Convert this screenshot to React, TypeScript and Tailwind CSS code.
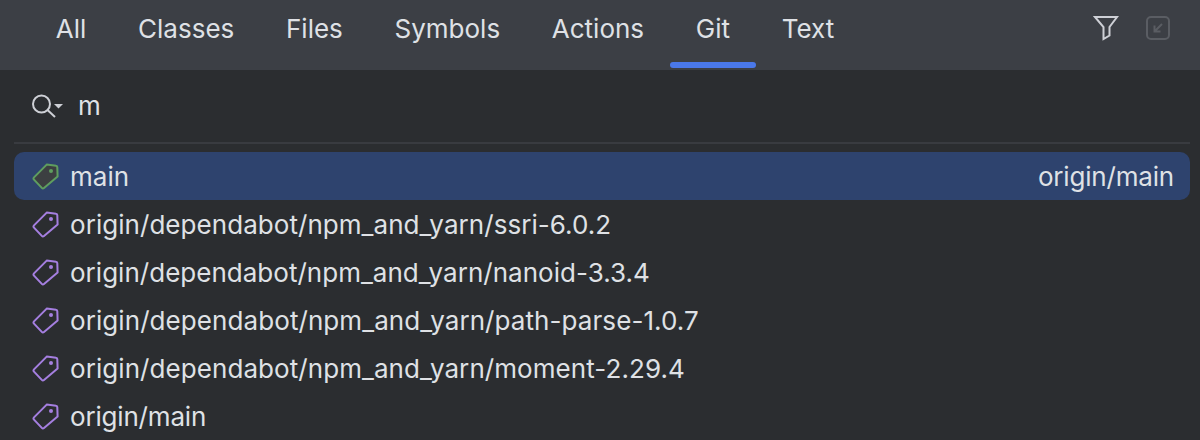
const tabs = ['All', 'Classes', 'Files', 'Symbols', 'Actions', 'Git', 'Text']

const rows = [
    { name: 'main', hint: 'origin/main', selected: true, tracking: '' },
    { name: 'origin/dependabot/npm_and_yarn/ssri-6.0.2', tracking: 'tracking-[0.05px]' },
    { name: 'origin/dependabot/npm_and_yarn/nanoid-3.3.4', tracking: 'tracking-[0.02px]' },
    { name: 'origin/dependabot/npm_and_yarn/path-parse-1.0.7', tracking: 'tracking-[0.08px]' },
    { name: 'origin/dependabot/npm_and_yarn/moment-2.29.4', tracking: 'tracking-[0.07px]' },
    { name: 'origin/main', tracking: 'tracking-[-0.18px]' }
]

function TagIcon({ selected }: { selected?: boolean }) {
    const stroke = selected ? '#5f9e5f' : '#a57fe0'
    return (
        <svg className="h-[28px] w-[28px] shrink-0" viewBox="0 0 28 28" fill="none">
            <path
                d="M14.7 2.6 L24 3.8 a1.4 1.4 0 0 1 1.3 1.3 L25.6 14.6 L12 26 a1.6 1.6 0 0 1 -2.2 -0.1 L2 17.6 a1.6 1.6 0 0 1 0 -2.2 Z"
                fill={selected ? '#3c3f41' : 'none'}
                stroke={stroke}
                strokeWidth="2"
                strokeLinejoin="round"
            />
            <circle cx="19" cy="9" r="2" fill={stroke} />
        </svg>
    )
}

export default function App() {
    return (
        <div className="h-[440px] w-[1200px] overflow-hidden bg-[#2b2d30] font-['Inter',sans-serif] text-[26px] text-[#dfe1e5]">
            <div className="flex h-[70px] items-stretch bg-[#3c3f45] pl-[30px] pr-[29px]">
                {tabs.map((tab) => (
                    <div key={tab} className="relative flex items-center px-[25.85px] pb-[14px]">
                        {tab}
                        {tab === 'Git' && (
                            <span className="absolute bottom-[2px] left-0 right-0 h-[6px] rounded-full bg-[#4a78ea]" />
                        )}
                    </div>
                ))}
                <div className="ml-auto flex items-center gap-[26px] pb-[14px]">
                    <svg className="h-[26px] w-[26px]" viewBox="0 0 26 26" fill="none">
                        <path
                            d="M2 2 H24 L16.5 12 V20.5 L10.5 24 V12 Z"
                            stroke="#ced0d6"
                            strokeWidth="2"
                            strokeLinejoin="miter"
                        />
                    </svg>
                    <svg className="h-[26px] w-[26px]" viewBox="0 0 26 26" fill="none">
                        <rect x="2" y="2" width="22" height="22" rx="4" stroke="#5a5d63" strokeWidth="2" />
                        <path d="M17 9 L9.5 16.5 M9.5 10.5 V16.5 H15.5" stroke="#5a5d63" strokeWidth="2" />
                    </svg>
                </div>
            </div>
            <div className="flex h-[72px] items-center pl-[32px]">
                <svg className="h-[26px] w-[34px] shrink-0" viewBox="0 0 34 26" fill="none">
                    <circle cx="9.5" cy="11" r="8.5" stroke="#ced0d6" strokeWidth="2" />
                    <path d="M15.5 17 L23 24" stroke="#ced0d6" strokeWidth="2" />
                    <path d="M22 11 H31 L26.5 15.5 Z" fill="#ced0d6" />
                </svg>
                <span className="ml-[12px] pb-[2px]">m</span>
            </div>
            <div className="ml-[14px] mr-[10px] h-[2px] bg-[#393b40]" />
            <div className="ml-[14px] mr-[10px] mt-[8px]">
                {rows.map((row) => (
                    <div
                        key={row.name}
                        className={`flex h-[48px] items-center justify-between rounded-[10px] pl-[18px] pr-[16px] ${row.selected ? 'bg-[#2e436e]' : ''}`}
                    >
                        <div className="flex items-center gap-[10px]">
                            <TagIcon selected={row.selected} />
                            <span className={row.tracking}>{row.name}</span>
                        </div>
                        {row.hint && <span className="tracking-[-0.18px]">{row.hint}</span>}
                    </div>
                ))}
            </div>
        </div>
    )
}
